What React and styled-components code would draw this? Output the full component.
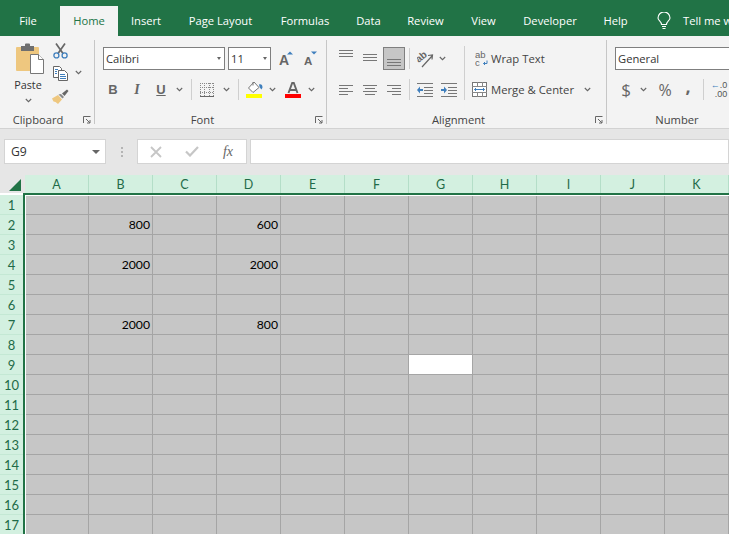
import React from "react";
import styled, { createGlobalStyle } from "styled-components";

const Global = createGlobalStyle`
  html, body { margin: 0; padding: 0; height: 100%; overflow: hidden; background: #e6e6e6; }
  body { font-family: "Open Sans", "Noto Sans", "Liberation Sans", sans-serif; font-size: 11.3px; color: #444; }
  #root { width: 729px; height: 534px; overflow: hidden; }
`;

const Page = styled.div`width: 729px; height: 534px; overflow: hidden; display: flex; flex-direction: column;`;

/* tabs */
const TabBar = styled.div`
  height: 36px; background: #217346; display: flex; align-items: flex-end; flex: none; white-space: nowrap;
`;
const Tab = styled.div`
  height: 30px; width: ${p => p.$w}px; margin-right: ${p => p.$mr || 0}px; display: flex; align-items: center; justify-content: center; flex: none;
  font-size: 11.2px; padding-bottom: 1px; box-sizing: border-box;
  color: ${p => (p.$active ? "#217346" : "#fff")};
  background: ${p => (p.$active ? "#f3f3f3" : "transparent")};
`;
const TellMe = styled.div`display: flex; align-items: center; gap: 12px; height: 30px; margin-left: 16px; color: #fff; font-size: 11.2px; padding-bottom: 1px; box-sizing: border-box;`;

/* ribbon */
const Ribbon = styled.div`
  height: 93px; flex: none; box-sizing: border-box; background: #f3f3f3; border-bottom: 1px solid #d2d2d2; display: flex; overflow: hidden;
`;
const Group = styled.div`
  width: ${p => p.$w}px; flex: none; box-sizing: border-box; position: relative; height: 100%;
  display: flex; flex-direction: column;
  &::after {
    content: ""; position: absolute; right: 0; top: 4px; bottom: 4px; width: 1px; background: ${p => (p.$open ? "transparent" : "#c6c6c6")};
  }
`;
const GroupBody = styled.div`flex: 1; padding-left: ${p => p.$pl}px; display: flex; ${p => (p.$stack ? "flex-direction: column; gap: 9px; padding-top: 11px;" : "")}`;
const GroupLabel = styled.div`height: 16px; line-height: 16px; flex: none; text-align: center; color: #444; font-size: 11.2px; width: ${p => (p.$w ? p.$w + "px" : "auto")}; padding-right: ${p => p.$pr || 0}px;`;
const Launcher = styled.svg`position: absolute; right: 4px; bottom: 4px;`;
const Row = styled.div`display: flex; align-items: center; height: ${p => p.$h || 23}px; flex: none;`;
const Slot = styled.div`
  width: ${p => p.$w}px; height: ${p => p.$h || 20}px; margin-left: ${p => p.$ml || 0}px; flex: none;
  display: flex; align-items: ${p => (p.$top ? "flex-start" : "center")}; justify-content: center;
`;
const LineSlot = styled.div`
  width: 14px; height: 23px; margin-left: ${p => p.$ml || 0}px; padding-top: ${p => p.$pt}px; box-sizing: border-box; flex: none;
`;
const VSep = styled.div`
  width: 1px; height: ${p => p.$h || 21}px; background: #cfcfcf; margin-left: ${p => p.$ml}px; flex: none;
  align-self: ${p => (p.$long ? "flex-start" : "center")}; margin-top: ${p => (p.$long ? "-1px" : 0)};
`;
const Combo = styled.div`
  width: ${p => p.$w}px; height: 23px; box-sizing: border-box; border: 1px solid #7f7f7f; background: #fff; margin-left: ${p => p.$ml || 0}px;
  display: flex; align-items: center; justify-content: space-between; padding: 0 3px 0 2px; flex: none;
  font-size: 11.2px; color: #333;
`;
const Caret = styled.span`
  width: 0; height: 0; margin-right: ${p => (p.$small ? 0 : 1)}px;
  border-left: ${p => (p.$small ? 2.5 : 4)}px solid transparent; border-right: ${p => (p.$small ? 2.5 : 4)}px solid transparent;
  border-top: ${p => (p.$small ? 3 : 4)}px solid #666;
`;
const Selected = styled.div`
  width: 22px; height: 23px; box-sizing: border-box; background: #c6c6c6; border: 1px solid #7f7f7f; margin-left: 6px; flex: none;
  display: flex; justify-content: center; padding-top: 11px;
`;
const ActionLabel = styled.span`font-size: 11.3px; color: #444; white-space: nowrap; margin-left: ${p => p.$ml || 0}px;`;
const Column = styled.div`display: flex; flex-direction: column; align-items: center; width: ${p => p.$w}px; margin-left: ${p => p.$ml || 0}px; flex: none; padding-top: ${p => p.$pt || 0}px;`;
const PasteIconBox = styled.div`align-self: flex-start; margin-left: 2px; height: 31px;`;
const PasteLabel = styled.div`margin-top: 3px; margin-bottom: 5px; line-height: 16px; font-size: 10.8px; color: #333;`;
const ToolRow = styled.div`display: flex; align-items: center; height: ${p => p.$h}px; margin-top: ${p => p.$mt || 0}px; flex: none;`;
const CopyChevron = styled.div`margin-top: 34px; width: 8px; margin-left: 6px; flex: none; display: flex; justify-content: center; height: 5px; align-self: flex-start;`;
const Decimal = styled.span`font-size: 9px; line-height: 9px; color: #555; font-family: "Liberation Sans", sans-serif; display: block; text-align: right;`;
const Arrow = styled.span`color: #3f7fbd;`;
const Symbol = styled.span`font-size: ${p => p.$s || 16}px; color: #666; font-family: ${p => p.$f || '"Open Sans", sans-serif'}; line-height: 1; font-weight: ${p => p.$b || 400}; font-style: ${p => (p.$i ? "italic" : "normal")}; text-decoration: ${p => (p.$u ? "underline" : "none")}; margin-top: ${p => p.$lift ? -p.$lift : 0}px;`;

/* formula bar */
const FormulaBar = styled.div`height: 46px; flex: none; background: #e6e6e6; display: flex; align-items: flex-start; padding: 10px 0 0 4px; box-sizing: border-box;`;
const Box = styled.div`
  height: 25px; box-sizing: border-box; background: #fff; border: 1px solid #d4d4d4; flex: ${p => (p.$grow ? 1 : "none")}; width: ${p => (p.$w ? p.$w + "px" : "auto")};
  margin-left: ${p => p.$ml || 0}px; display: flex; align-items: center;
`;
const NameBox = styled(Box)`justify-content: space-between; padding: 0 4px 0 6px; font-size: 12.2px; color: #333;`;
const Dots = styled.div`display: flex; flex-direction: column; gap: 2px; width: 2px; margin: 8px 0 0 15px; flex: none; & i { display:block; width: 2px; height: 2px; background: #b4b4b4; }`;
const FxButton = styled.div`width: 36px; display: flex; align-items: center; justify-content: center; flex: none;`;
const FxText = styled.span`font-family: "Liberation Serif", serif; font-style: italic; font-size: 14px; color: #666;`;

/* sheet */
const Sheet = styled.div`flex: 1; min-height: 0; overflow: hidden; display: flex; flex-direction: column; background: #fff;`;
const ColHeaders = styled.div`height: 18px; flex: none; display: flex; background: #d3f0e0;`;
const Corner = styled.div`width: 25px; flex: none; background: #e6e6e6; display: flex; align-items: flex-end; justify-content: flex-end; padding: 0 4px 2px 0; box-sizing: border-box;`;
const ColHead = styled.div`
  width: 64px; flex: none; box-sizing: border-box; border-right: 1px solid #b4dec8;
  display: flex; align-items: center; justify-content: center;
  font-family: "Lato", "Liberation Sans", sans-serif; font-size: 12.5px; color: #1f6b48;
`;
const SheetBody = styled.div`flex: 1; display: flex; min-height: 0;`;
const RowHeads = styled.div`width: 23px; flex: none; padding-top: 2px; box-sizing: border-box;`;
const RowHead = styled.div`
  height: 20px; box-sizing: border-box; display: flex; align-items: center; justify-content: center; background: #d3f0e0;
  border-bottom: 1px solid #c4e8d4;
  font-family: "Lato", "Liberation Sans", sans-serif; font-size: 13px; color: #1f6b48;
`;
const Grid = styled.div`
  flex: 1; border-left: 2px solid #217346; border-top: 2px solid #217346; padding: 1px 0 0 1px; background: #fff;
  display: grid; grid-template-columns: 63px repeat(10, 64px); grid-template-rows: 19px; grid-auto-rows: 20px; align-content: start;
`;
const Cell = styled.div`
  box-sizing: border-box; height: 100%; border-right: 1px solid #a5a5a5; border-bottom: 1px solid #a5a5a5;
  background: ${p => (p.$active ? "#fff" : "#c6c6c6")}; text-align: right; padding-right: 2px;
  font-family: "Lato", "Liberation Sans", sans-serif; font-size: 12.2px; line-height: 20px; color: #000;
`;

/* icons */
const Chevron = () => <svg width="7" height="5" viewBox="0 0 7 5"><path d="M.8 1l2.700 2.700L6.200 1" fill="none" stroke="#666" strokeWidth="1.100" /></svg>;
const Lines = ({ rows, w = 14, c = "#777" }) => (
  <svg width={w} height={rows[rows.length - 1].y + 1} style={{ display: "block" }}>
    {rows.map((r, i) => <rect key={i} x={r.x} y={r.y} width={r.w} height="1" fill={c} />)}
  </svg>
);
const LaunchIcon = () => (
  <Launcher width="8" height="8" viewBox="0 0 8 8"><path d="M.5 7V.5h7M3 3l4 4M7 4v3H4" fill="none" stroke="#666" strokeWidth="1" /></Launcher>
);
const ClipboardIcon = () => (
  <svg width="28" height="31" viewBox="0 0 28 31">
    <path d="M1 4h21a1 1 0 011 1v23H1a1 1 0 01-1-1V5a1 1 0 011-1z" fill="#eec77f" />
    <path d="M5 3h4V1.500a1 1 0 011-1h3a1 1 0 011 1V3h4v5H5z" fill="#6f6f6f" />
    <path d="M14.500 11.500h8l5 5v14h-13z" fill="#fff" stroke="#777" />
    <path d="M22.500 11.500v5h5" fill="#fff" stroke="#777" />
  </svg>
);
const Scissors = () => (
  <svg width="15" height="16" viewBox="0 0 15 16">
    <path d="M3 .5l7 10M12 .5l-7 10" stroke="#666" strokeWidth="1.700" fill="none" />
    <circle cx="3.400" cy="12.400" r="2.500" fill="none" stroke="#3f7fbd" strokeWidth="1.300" />
    <circle cx="11.600" cy="12.400" r="2.500" fill="none" stroke="#3f7fbd" strokeWidth="1.300" />
  </svg>
);
const CopyIcon = () => (
  <svg width="15" height="15" viewBox="0 0 15 15">
    <path d="M.5.5h6l2 2v2h-3v7h-5z" fill="#fff" stroke="#666" />
    <path d="M5.500 4.500h6l3 3v7h-9z" fill="#fff" stroke="#666" />
    <path d="M7 8.500h5M7 10.500h6M7 12.500h6M2 3.500h3M2 5.500h2M2 7.500h2" stroke="#3f7fbd" strokeWidth="1" />
  </svg>
);
const Brush = () => (
  <svg width="17" height="15" viewBox="0 0 17 15">
    <path d="M0 9.500l6-3.500 4 4.500L6 15 3.500 13 1.500 12.500z" fill="#eec77f" />
    <path d="M6.500 5.500l4 4L12 8l-3-3z" fill="#888" />
    <path d="M10 4.500l5-4 1.500 1.500-4 5z" fill="#666" />
  </svg>
);
const GrowA = ({ up }) => (
  <svg width="15" height="16" viewBox="0 0 15 16">
    <text x="0" y="14" fontFamily="Liberation Sans, sans-serif" fontSize={up ? 14 : 11.500} fill="#666" fontWeight="700">A</text>
    <path d={up ? "M8 3.500l3-3 3 3z" : "M7 .5h6l-3 3z"} fill="#3f7fbd" />
  </svg>
);
const BorderIcon = () => (
  <svg width="14" height="14" viewBox="0 0 14 14">
    <path d="M.5 0v14M4.500 0v14M9.500 0v14M13.500 0v14M0 .5h14M0 4.500h14M0 9.500h14" stroke="#888" strokeDasharray="1 1" fill="none" />
    <path d="M0 13.500h14" stroke="#666" />
  </svg>
);
const FillIcon = () => (
  <svg width="17" height="18" viewBox="0 0 17 18">
    <path d="M8 2L2.500 8 7 12.500 13 7.500z" fill="#fff" stroke="#777" />
    <path d="M7 2v3.500" stroke="#777" />
    <path d="M13 4.500c2-.5 3.500 0 3.500 3l-1 2c-1-1-2-2-2.500-5z" fill="#3f7fbd" />
    <rect x="0" y="14" width="16" height="4" fill="#ffff00" />
  </svg>
);
const FontColor = () => (
  <svg width="16" height="18" viewBox="0 0 16 18">
    <path d="M3.500 13L7.200 3h1.600l3.700 10M5 10h6" fill="none" stroke="#666" strokeWidth="1.900" />
    <rect x="0" y="14" width="16" height="4" fill="#ff0000" />
  </svg>
);
const Orientation = () => (
  <svg width="17" height="18" viewBox="0 0 17 18">
    <text x="0" y="10" transform="rotate(-40 5 9)" fontFamily="Liberation Sans, sans-serif" fontSize="10" fill="#666" fontWeight="700">ab</text>
    <path d="M5 17L15 6M11 5.500l4.500-.5-.5 4.500" fill="none" stroke="#666" strokeWidth="1.200" />
  </svg>
);
const Indent = ({ flip }) => (
  <svg width="17" height="14" viewBox="0 0 17 14">
    <path d="M0 .5h16M0 13.500h16M7 4.500h9M7 7.500h9M7 10.500h9" stroke="#777" fill="none" />
    {flip
      ? <path d="M0 6h3V3.500L6 7l-3 3.500V8H0z" fill="#3f7fbd" />
      : <path d="M6 6H3V3.500L0 7l3 3.500V8h3z" fill="#3f7fbd" />}
  </svg>
);
const MergeIcon = () => (
  <svg width="15" height="15" viewBox="0 0 15 15">
    <rect x=".5" y=".5" width="14" height="14" fill="#fff" stroke="#777" />
    <path d="M0 4.500h15M0 10.500h15M5.500 0v4M10.500 0v4M5.500 11v4M10.500 11v4" stroke="#888" />
    <path d="M2.500 7.500h10M4 6L2.500 7.500 4 9M11 6l1.500 1.500L11 9" fill="none" stroke="#3f7fbd" />
  </svg>
);
const Bulb = () => (
  <svg width="14" height="18" viewBox="0 0 14 18">
    <path d="M4.500 12.500C4.500 9.500 1 8.500 1 6a6 6 0 0112 0c0 2.500-3.500 3.500-3.500 6.500z" fill="none" stroke="#fff" strokeWidth="1.100" />
    <path d="M5 14.500h4M5.500 16.500h3" stroke="#fff" strokeWidth="1.100" />
  </svg>
);
const CornerMark = () => <svg width="12" height="12" viewBox="0 0 12 12" style={{ display: "block" }}><path d="M12 0v12H0z" fill="#217346" /></svg>;
const CrossIcon = () => <svg width="12" height="12" viewBox="0 0 12 12"><path d="M1 1l10 10M11 1L1 11" stroke="#c6c6c6" strokeWidth="1.800" /></svg>;
const CheckIcon = () => <svg width="14" height="11" viewBox="0 0 14 11"><path d="M1 5.500l4 4L13 1" fill="none" stroke="#c6c6c6" strokeWidth="2.200" /></svg>;
const WrapGlyph = () => (
  <svg width="14" height="15" viewBox="0 0 14 15">
    <text x="0" y="7" fontFamily="Liberation Sans, sans-serif" fontSize="9.500" fill="#666">ab</text>
    <text x="0" y="15" fontFamily="Liberation Sans, sans-serif" fontSize="9.500" fill="#666">c</text>
    <path d="M12 9.500v3H8.500M10 11l-1.500 1.500L10 14" fill="none" stroke="#3f7fbd" />
  </svg>
);

const left = [0, 3, 6, 9].map((y, i) => ({ x: 0, y, w: i % 2 ? 9 : 14 }));
const center = [0, 3, 6, 9].map((y, i) => ({ x: i % 2 ? 2 : 0, y, w: i % 2 ? 10 : 14 }));
const right = [0, 3, 6, 9].map((y, i) => ({ x: i % 2 ? 5 : 0, y, w: i % 2 ? 9 : 14 }));
const three = [0, 3, 6].map(y => ({ x: 0, y, w: 14 }));

const tabs = [["File", 56, 4], ["Home", 58], ["Insert", 56], ["Page Layout", 93], ["Formulas", 76], ["Data", 51], ["Review", 63], ["View", 53], ["Developer", 80], ["Help", 51]];
const cols = ["A", "B", "C", "D", "E", "F", "G", "H", "I", "J", "K"];
const values = { "2-1": "800", "2-3": "600", "4-1": "2000", "4-3": "2000", "7-1": "2000", "7-3": "800" };
const rows = Array.from({ length: 17 }, (_, i) => i + 1);

export default function App() {
  return (
    <Page>
      <Global />
      <TabBar>
        {tabs.map(([t, w, mr]) => <Tab key={t} $w={w} $mr={mr} $active={t === "Home"}>{t}</Tab>)}
        <TellMe><Bulb /><span>Tell me what you want to do</span></TellMe>
      </TabBar>

      <Ribbon>
        <Group $w={95}>
          <GroupBody $pl={14}>
            <Column $w={28} $pt={7}>
              <PasteIconBox><ClipboardIcon /></PasteIconBox>
              <PasteLabel>Paste</PasteLabel>
              <Chevron />
            </Column>
            <Column $w={16} $ml={10} $pt={7}>
              <Scissors />
              <ToolRow $h={15} $mt={7}><CopyIcon /></ToolRow>
              <ToolRow $h={15} $mt={8}><Brush /></ToolRow>
            </Column>
            <CopyChevron><Chevron /></CopyChevron>
          </GroupBody>
          <GroupLabel $pr={19}>Clipboard</GroupLabel>
          <LaunchIcon />
        </Group>

        <Group $w={232}>
          <GroupBody $pl={8} $stack>
            <Row>
              <Combo $w={122}><span>Calibri</span><Caret $small /></Combo>
              <Combo $w={43} $ml={3}><span>11</span><Caret $small /></Combo>
              <Slot $w={15} $ml={8}><GrowA up /></Slot>
              <Slot $w={15} $ml={10}><GrowA /></Slot>
            </Row>
            <Row $h={21}>
              <Slot $w={12} $ml={4}><Symbol $f='"Liberation Sans", sans-serif' $b={700} $s={13}>B</Symbol></Slot>
              <Slot $w={12} $ml={12}><Symbol $f='"Liberation Serif", serif' $s={14} $i $b={700}>I</Symbol></Slot>
              <Slot $w={12} $ml={12}><Symbol $f='"Liberation Sans", sans-serif' $b={700} $s={13} $u>U</Symbol></Slot>
              <Slot $w={8} $ml={8}><Chevron /></Slot>
              <VSep $ml={8} />
              <Slot $w={14} $ml={8}><BorderIcon /></Slot>
              <Slot $w={8} $ml={8}><Chevron /></Slot>
              <VSep $ml={8} />
              <Slot $w={17} $ml={7} $top><FillIcon /></Slot>
              <Slot $w={8} $ml={5}><Chevron /></Slot>
              <Slot $w={16} $ml={9} $top><FontColor /></Slot>
              <Slot $w={8} $ml={6}><Chevron /></Slot>
            </Row>
          </GroupBody>
          <GroupLabel $pr={17}>Font</GroupLabel>
          <LaunchIcon />
        </Group>

        <Group $w={280}>
          <GroupBody $pl={12} $stack>
            <Row>
              <LineSlot $pt={3}><Lines rows={three} /></LineSlot>
              <LineSlot $pt={7} $ml={10}><Lines rows={three} /></LineSlot>
              <Selected><Lines rows={three} /></Selected>
              <VSep $ml={4} />
              <Slot $w={17} $ml={7}><Orientation /></Slot>
              <Slot $w={8} $ml={4}><Chevron /></Slot>
              <VSep $ml={18} $h={54} $long />
              <Slot $w={15} $ml={9} $h={16}><WrapGlyph /></Slot>
              <ActionLabel $ml={2}>Wrap Text</ActionLabel>
            </Row>
            <Row $h={21}>
              <Slot $w={14}><Lines rows={left} /></Slot>
              <Slot $w={14} $ml={10}><Lines rows={center} /></Slot>
              <Slot $w={14} $ml={10}><Lines rows={right} /></Slot>
              <VSep $ml={8} />
              <Slot $w={17} $ml={7}><Indent /></Slot>
              <Slot $w={17} $ml={7}><Indent flip /></Slot>
              <Slot $w={15} $ml={14}><MergeIcon /></Slot>
              <ActionLabel $ml={4}>Merge &amp; Center</ActionLabel>
              <Slot $w={8} $ml={9}><Chevron /></Slot>
            </Row>
          </GroupBody>
          <GroupLabel $pr={17}>Alignment</GroupLabel>
          <LaunchIcon />
        </Group>

        <Group $w={200} $open>
          <GroupBody $pl={8} $stack>
            <Row><Combo $w={150}><span>General</span></Combo></Row>
            <Row $h={21}>
              <Slot $w={12} $ml={5}><Symbol $s={17}>$</Symbol></Slot>
              <Slot $w={8} $ml={7}><Chevron /></Slot>
              <Slot $w={16} $ml={10}><Symbol $s={16}>%</Symbol></Slot>
              <Slot $w={6} $ml={12}><Symbol $s={18} $b={700} $lift={8}>,</Symbol></Slot>
              <VSep $ml={12} />
              <Slot $w={16} $ml={7}>
                <div><Decimal><Arrow>←</Arrow>.0</Decimal><Decimal>.00</Decimal></div>
              </Slot>
            </Row>
          </GroupBody>
          <GroupLabel $w={140}>Number</GroupLabel>
        </Group>
      </Ribbon>

      <FormulaBar>
        <NameBox $w={102}><span>G9</span><Caret /></NameBox>
        <Dots><i /><i /><i /></Dots>
        <Box $w={110} $ml={14}>
          <FxButton><CrossIcon /></FxButton>
          <FxButton><CheckIcon /></FxButton>
          <FxButton><FxText>fx</FxText></FxButton>
        </Box>
        <Box $grow $ml={3} />
      </FormulaBar>

      <Sheet>
        <ColHeaders>
          <Corner><CornerMark /></Corner>
          {cols.map(c => <ColHead key={c}>{c}</ColHead>)}
        </ColHeaders>
        <SheetBody>
          <RowHeads>{rows.map(r => <RowHead key={r}>{r}</RowHead>)}</RowHeads>
          <Grid>
            {rows.flatMap(r => cols.map((c, i) => (
              <Cell key={c + r} $active={r === 9 && c === "G"}>{values[`${r}-${i}`]}</Cell>
            )))}
          </Grid>
        </SheetBody>
      </Sheet>
    </Page>
  );
}
